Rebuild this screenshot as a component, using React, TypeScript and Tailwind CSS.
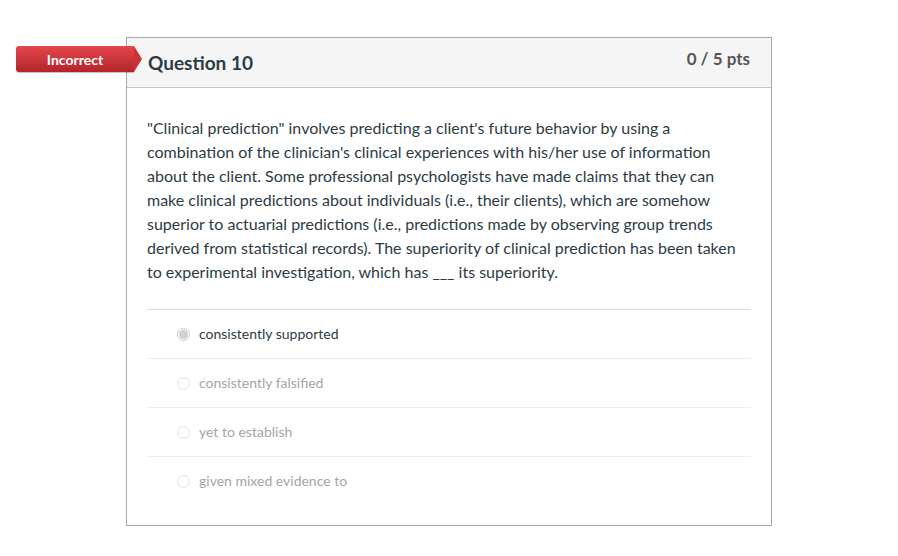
import React from "react";

const answers = [
  { text: "consistently supported", selected: true },
  { text: "consistently falsified", selected: false },
  { text: "yet to establish", selected: false },
  { text: "given mixed evidence to", selected: false },
];

export default function App() {
  return (
    <div className="w-[898px] h-[556px] bg-white overflow-hidden" style={{ fontFamily: "Lato, 'Noto Sans', sans-serif" }}>
      <div className="relative ml-[126px] mt-[37px] w-[646px] h-[489px] border border-[#a8a8a8] bg-white">
        {/* Incorrect badge */}
        <div className="absolute left-[-111px] top-[8px] flex items-center">
          <div className="w-[118px] h-[26px] rounded-l-[3px] bg-gradient-to-b from-[#e4474b] to-[#b3242a] flex items-center justify-center text-white text-[14px] font-bold shadow-[0_1px_1px_rgba(0,0,0,0.25)]">
            Incorrect
          </div>
          <div className="w-0 h-0 border-y-[13px] border-y-transparent border-l-[8px] border-l-[#c93236]" />
        </div>
        {/* Header */}
        <div className="h-[50px] bg-[#f5f5f5] border-b border-[#c7c7c7] flex justify-between px-[21px]">
          <div className="pt-[13px] text-[19px] font-bold text-[#2d3b45] leading-[24px]">Question 10</div>
          <div className="pt-[9px] text-[17px] font-bold text-[#555] leading-[24px]">0 / 5 pts</div>
        </div>
        {/* Body */}
        <div className="px-[20px] pt-[28px]">
          <p className="text-[16px] leading-[24px] text-[#2d3b45] pr-[10px]">
            "Clinical prediction" involves predicting a client's future behavior by using a combination of the clinician's clinical experiences with his/her use of information about the client. Some professional psychologists have made claims that they can make clinical predictions about individuals (i.e., their clients), which are somehow superior to actuarial predictions (i.e., predictions made by observing group trends derived from statistical records). The superiority of clinical prediction has been taken to experimental investigation, which has ___ its superiority.
          </p>
          <div className="mt-[25px] border-t border-[#dcdcdc]">
            {answers.map((a, i) => (
              <div
                key={a.text}
                className={`box-content h-[48px] flex items-center pl-[30px] leading-[20px] ${i > 0 ? "border-t border-[#eeeeee]" : ""}`}
              >
                <span
                  className={`shrink-0 w-[13px] h-[13px] rounded-full border flex items-center justify-center ${
                    a.selected ? "border-[#c8c8c8] bg-white" : "border-[#e2e2e2] bg-white"
                  }`}
                >
                  {a.selected && <span className="w-[9px] h-[9px] rounded-full bg-[#cfcfcf]" />}
                </span>
                <span className={`ml-[9px] text-[14px] ${a.selected ? "text-[#2d3b45]" : "text-[#a5a5a5]"}`}>
                  {a.text}
                </span>
              </div>
            ))}
          </div>
        </div>
      </div>
    </div>
  );
}
